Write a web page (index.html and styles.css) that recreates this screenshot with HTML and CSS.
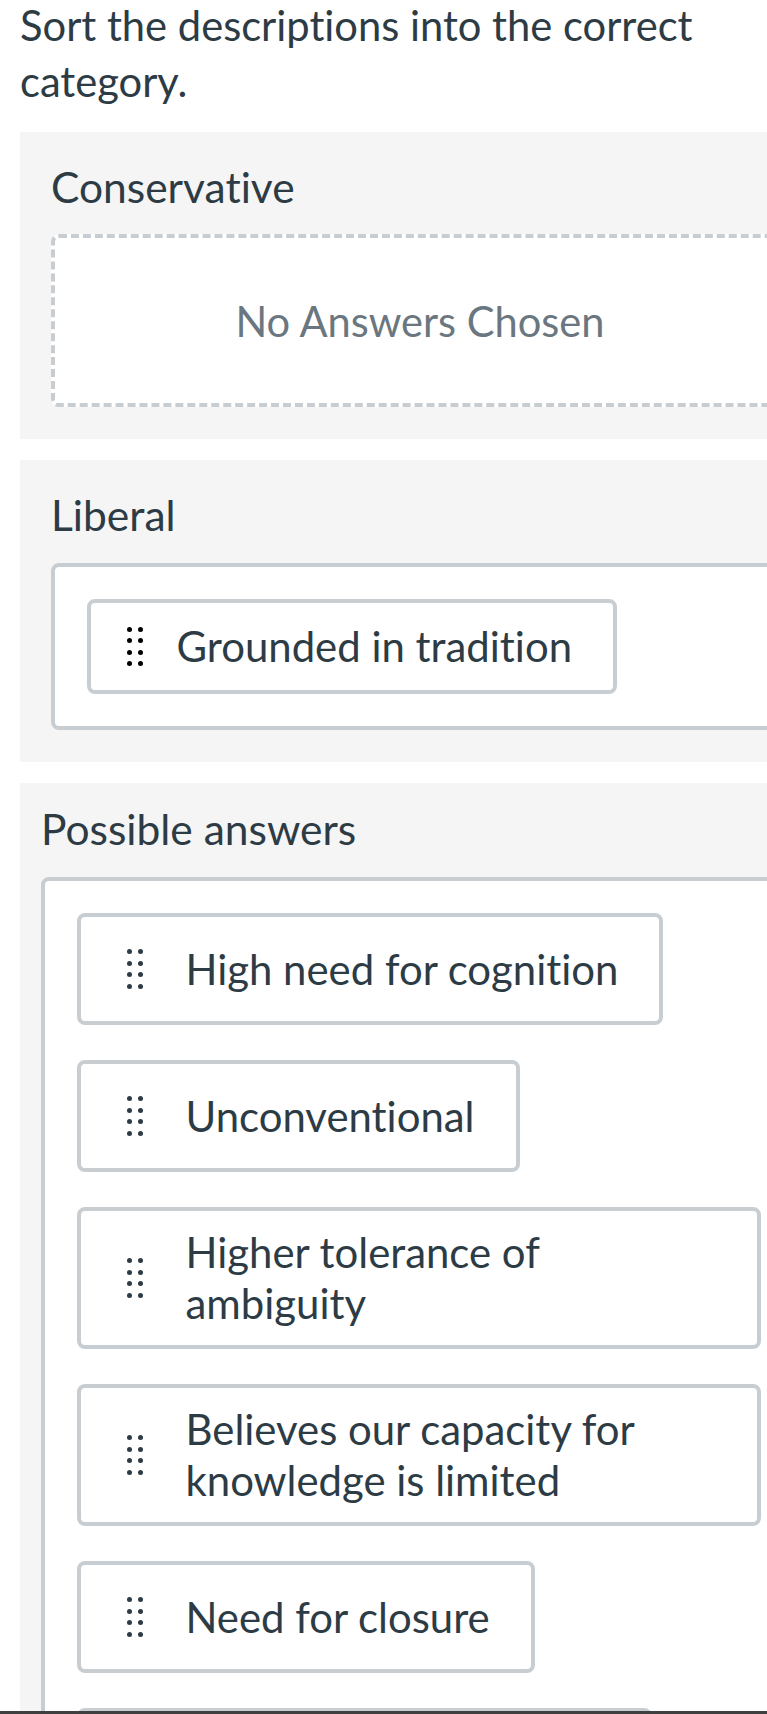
FILE: index.html
```html
<!DOCTYPE html>
<html lang="en">
<head>
<meta charset="utf-8">
<title>Sort the descriptions</title>
<link rel="stylesheet" href="styles.css">
</head>
<body>
<div class="page">
  <h1 class="prompt">Sort the descriptions into the correct category.</h1>

  <section class="panel">
    <h2 class="panel-title">Conservative</h2>
    <div class="dropzone dropzone-empty">No Answers Chosen</div>
  </section>

  <section class="panel">
    <h2 class="panel-title">Liberal</h2>
    <div class="dropzone">
      <div class="item item-placed">
        <span class="handle handle-black"><i></i><i></i><i></i><i></i><i></i><i></i><i></i><i></i></span>
        <span class="item-text">Grounded in tradition</span>
      </div>
    </div>
  </section>

  <section class="panel panel-answers">
    <h2 class="panel-title">Possible answers</h2>
    <div class="dropzone answers">
      <div class="item">
        <span class="handle"><i></i><i></i><i></i><i></i><i></i><i></i><i></i><i></i></span>
        <span class="item-text">High need for cognition</span>
      </div>
      <div class="item">
        <span class="handle"><i></i><i></i><i></i><i></i><i></i><i></i><i></i><i></i></span>
        <span class="item-text">Unconventional</span>
      </div>
      <div class="item">
        <span class="handle"><i></i><i></i><i></i><i></i><i></i><i></i><i></i><i></i></span>
        <span class="item-text">Higher tolerance of ambiguity</span>
      </div>
      <div class="item">
        <span class="handle"><i></i><i></i><i></i><i></i><i></i><i></i><i></i><i></i></span>
        <span class="item-text">Believes our capacity for knowledge is limited</span>
      </div>
      <div class="item">
        <span class="handle"><i></i><i></i><i></i><i></i><i></i><i></i><i></i><i></i></span>
        <span class="item-text">Need for closure</span>
      </div>
      <div class="item">
        <span class="handle"><i></i><i></i><i></i><i></i><i></i><i></i><i></i><i></i></span>
        <span class="item-text">Low need for cognition</span>
      </div>
    </div>
  </section>
</div>
<div class="bottom-bar"></div>
</body>
</html>
```

FILE: styles.css
```css
html, body {
  margin: 0;
  padding: 0;
  background: #ffffff;
  overflow: hidden;
}

body {
  font-family: Lato, "Noto Sans", sans-serif;
  color: #2d3b45;
  font-variant-ligatures: no-common-ligatures;
  font-feature-settings: "liga" 0, "clig" 0;
}

.page {
  width: 800px;
  padding: 0 0 0 20px;
}

.prompt {
  margin: -3px 0 23px 0;
  font-size: 41.7px;
  font-weight: 400;
  line-height: 56px;
}

.panel {
  background: #f5f5f5;
  padding: 30px 0 32px 31px;
  margin-bottom: 21px;
  display: flex;
  flex-direction: column;
  width: 769px;
}

.panel-answers {
  padding: 21px 0 32px 21px;
  width: 779px;
}

.panel-title {
  margin: 0 0 23px 0;
  font-size: 42.5px;
  font-weight: 400;
  line-height: 50px;
}

.dropzone {
  background: #ffffff;
  border: 4px solid #c7cdd1;
  border-radius: 8px;
  padding: 32px;
  width: 738px;
  box-sizing: border-box;
  display: flex;
  flex-direction: column;
  align-items: flex-start;
}

.dropzone-empty {
  border: 4px dashed #c7cdd1;
  height: 173px;
  padding: 0;
  align-items: center;
  justify-content: center;
  font-size: 41.6px;
  color: #6b7780;
  margin-top: -1px;
}

.answers {
  width: 757px;
  gap: 35px;
}

.item {
  display: flex;
  align-items: center;
  box-sizing: border-box;
  border: 4px solid #c7cdd1;
  border-radius: 8px;
  background: #ffffff;
  min-height: 112px;
  padding: 16px 41px 16px 45px;
  max-width: 684px;
  font-size: 41.9px;
  line-height: 51px;
}

.item-placed {
  min-height: 95px;
  padding: 16px 41px 16px 35px;
}

.item-placed .handle {
  margin-right: 33px;
}

.handle {
  flex: none;
  display: grid;
  grid-template-columns: 5px 5px;
  grid-auto-rows: 5px;
  column-gap: 6.5px;
  row-gap: 6.5px;
  margin-right: 42px;
  padding: 0 0.5px;
}

.handle i {
  display: block;
  width: 5px;
  height: 5px;
  border-radius: 50%;
  background: #2d3b45;
}

.handle-black i {
  background: #000000;
}

.item-text {
  display: block;
}

.bottom-bar {
  position: fixed;
  left: 0;
  right: 0;
  bottom: 0;
  height: 3px;
  background: #3f3f3f;
}
```
